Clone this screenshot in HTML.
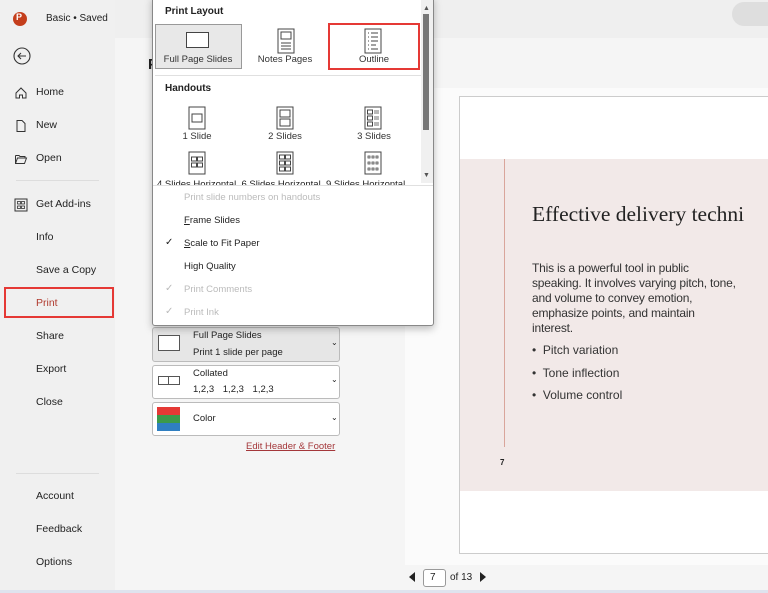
<!DOCTYPE html>
<html><head><meta charset="utf-8"><style>
*{margin:0;padding:0;box-sizing:border-box}
body{width:768px;height:593px;overflow:hidden;background:#f5f5f5;font-family:"Segoe UI","Liberation Sans",sans-serif;font-size:10px;color:#222;position:relative}
.a{position:absolute}
.nav{left:36px;font-size:10.5px;color:#222}
.ico{left:14px;width:14px;height:14px}
.dd{background:#fff;border:1px solid #888;border-radius:3px;box-shadow:0 3px 8px rgba(0,0,0,.25)}
.lbl{font-size:9.5px;color:#333;text-align:center;width:90px}
.mi{left:32px;font-size:9.5px;color:#222}
.dis{color:#bbb}
.box{border:1px solid #bbb;border-radius:3px;background:#fff}
</style></head><body>
<div class="a" style="left:0;top:0;width:768px;height:38px;background:#efefef"></div>
<div class="a" style="left:0;top:0;width:115px;height:593px;background:#f0f0f0"></div>
<div class="a" style="left:13px;top:12px;width:14px;height:14px;border-radius:50%;background:#c43e1c"></div>
<div class="a" style="left:16px;top:12px;color:#fff;font-size:9px;font-weight:bold">P</div>
<div class="a" style="left:46px;top:13px;font-size:10px">Basic • Saved</div>
<svg class="a" style="left:13px;top:47px" width="18" height="18" viewBox="0 0 18 18"><circle cx="9" cy="9" r="8" fill="none" stroke="#333" stroke-width="1.1"/><path d="M13 9H5M8 6L5 9L8 12" fill="none" stroke="#333" stroke-width="1.1"/></svg>
<svg class="a ico" style="top:86px" viewBox="0 0 14 14"><path d="M2 7L7 2L12 7V12H8.5V9H5.5V12H2Z" fill="none" stroke="#333"/></svg>
<div class="a nav" style="top:86px">Home</div>
<svg class="a ico" style="top:119px" viewBox="0 0 14 14"><path d="M3 1.5H8L11 4.5V12.5H3Z" fill="none" stroke="#333"/></svg>
<div class="a nav" style="top:119px">New</div>
<svg class="a ico" style="top:152px" viewBox="0 0 14 14"><path d="M1.5 3.5H5L6 4.5H11V6M1.5 3.5V11.5H10.5L12.5 6H3.5L1.5 11.5" fill="none" stroke="#333"/></svg>
<div class="a nav" style="top:152px">Open</div>
<div class="a" style="left:16px;top:180px;width:83px;height:1px;background:#ddd"></div>
<svg class="a ico" style="top:198px" viewBox="0 0 14 14"><rect x="1" y="1" width="12" height="12" fill="none" stroke="#333"/><rect x="3.5" y="3.5" width="3" height="2.5" fill="none" stroke="#333" stroke-width=".8"/><rect x="7.5" y="3.5" width="3" height="2.5" fill="none" stroke="#333" stroke-width=".8"/><rect x="3.5" y="8" width="3" height="2.5" fill="none" stroke="#333" stroke-width=".8"/><rect x="7.5" y="8" width="3" height="2.5" fill="none" stroke="#333" stroke-width=".8"/></svg>
<div class="a nav" style="top:198px">Get Add-ins</div>
<div class="a nav" style="top:231px">Info</div>
<div class="a nav" style="top:264px">Save a Copy</div>
<div class="a" style="left:4px;top:287px;width:110px;height:31px;border:2px solid #e53935"></div>
<div class="a nav" style="top:297px;color:#b03a2e">Print</div>
<div class="a nav" style="top:330px">Share</div>
<div class="a nav" style="top:363px">Export</div>
<div class="a nav" style="top:396px">Close</div>
<div class="a" style="left:16px;top:473px;width:83px;height:1px;background:#ddd"></div>
<div class="a nav" style="top:490px">Account</div>
<div class="a nav" style="top:523px">Feedback</div>
<div class="a nav" style="top:556px">Options</div>
<div class="a" style="left:115px;top:38px;width:653px;height:555px;background:#f5f5f5"></div>
<div class="a" style="left:148px;top:56px;font-size:15px;font-weight:bold">P</div>
<div class="a" style="left:405px;top:88px;width:363px;height:477px;background:#fbfbfb"></div>
<div class="a" style="left:459px;top:96px;width:320px;height:458px;background:#fff;border:1px solid #ccc"></div>
<div class="a" style="left:460px;top:159px;width:308px;height:332px;background:#f2e9e8"></div>
<div class="a" style="left:504px;top:159px;width:1px;height:288px;background:#d9a59b"></div>
<div class="a" style="left:532px;top:202px;font-family:'Liberation Serif',serif;font-size:21.5px;color:#222;white-space:nowrap">Effective delivery techni</div>
<div class="a" style="left:532px;top:261px;white-space:nowrap;font-family:'Liberation Sans',sans-serif;font-size:12px;line-height:15px;color:#333;letter-spacing:-0.2px">This is a powerful tool in public<br>speaking. It involves varying pitch, tone,<br>and volume to convey emotion,<br>emphasize points, and maintain<br>interest.</div>
<div class="a" style="left:532px;top:339px;font-family:'Liberation Sans',sans-serif;font-size:12px;line-height:22.5px;color:#333">•&nbsp; Pitch variation<br>•&nbsp; Tone inflection<br>•&nbsp; Volume control</div>
<div class="a" style="left:500px;top:458px;font-size:8px;font-weight:bold">7</div>
<div class="a" style="left:409px;top:572px;width:0;height:0;border-top:5px solid transparent;border-bottom:5px solid transparent;border-right:6px solid #222"></div>
<div class="a" style="left:423px;top:569px;width:23px;height:18px;border:1px solid #999;border-radius:3px;background:#fff;font-size:10px;padding:2px 0 0 6px">7</div>
<div class="a" style="left:450px;top:572px;font-size:10px">of 13</div>
<div class="a" style="left:480px;top:572px;width:0;height:0;border-top:5px solid transparent;border-bottom:5px solid transparent;border-left:6px solid #222"></div>
<div class="a" style="left:0;top:590px;width:768px;height:3px;background:#dfe3ee"></div>
<div class="a" style="left:732px;top:2px;width:36px;height:24px;border-radius:14px 0 0 14px;background:#dedede"></div>
<div class="a box" style="left:152px;top:327px;width:188px;height:35px;background:#e6e6e6"></div>
<div class="a" style="left:158px;top:335px;width:22px;height:16px;border:1px solid #555;background:#fff"></div>
<div class="a" style="left:193px;top:330px;font-size:9.5px">Full Page Slides</div>
<div class="a" style="left:193px;top:347px;font-size:9.5px">Print 1 slide per page</div>
<div class="a" style="left:331px;top:338px;font-size:8px">⌄</div>
<div class="a box" style="left:152px;top:365px;width:188px;height:34px"></div>
<div class="a" style="left:158px;top:376px;width:11px;height:9px;border:1px solid #555"></div>
<div class="a" style="left:169px;top:376px;width:11px;height:9px;border:1px solid #555;border-left:none"></div>
<div class="a" style="left:193px;top:368px;font-size:9.5px">Collated</div>
<div class="a" style="left:193px;top:384px;font-size:9.5px;word-spacing:6px">1,2,3 1,2,3 1,2,3</div>
<div class="a" style="left:331px;top:375px;font-size:8px">⌄</div>
<div class="a box" style="left:152px;top:402px;width:188px;height:34px"></div>
<div class="a" style="left:157px;top:407px;width:23px;height:8px;background:#e53935"></div>
<div class="a" style="left:157px;top:415px;width:23px;height:8px;background:#3c9a4a"></div>
<div class="a" style="left:157px;top:423px;width:23px;height:8px;background:#2f7fc1"></div>
<div class="a" style="left:193px;top:413px;font-size:9.5px">Color</div>
<div class="a" style="left:331px;top:413px;font-size:8px">⌄</div>
<div class="a" style="left:246px;top:441px;font-size:9.5px;color:#a4373a;text-decoration:underline">Edit Header &amp; Footer</div>
<div class="a dd" style="left:152px;top:-4px;width:282px;height:330px"></div>
<div class="a" style="left:421px;top:0;width:12px;height:183px;background:#f0f0f0"></div>
<div class="a" style="left:423px;top:14px;width:6px;height:116px;background:#777"></div>
<div class="a" style="left:423px;top:5px;font-size:7px;color:#555">▲</div>
<div class="a" style="left:423px;top:172px;font-size:7px;color:#555">▼</div>
<div class="a" style="left:165px;top:6px;font-size:10px;font-weight:bold">Print Layout</div>
<div class="a" style="left:155px;top:24px;width:87px;height:45px;background:#e8e8e8;border:1px solid #999"></div>
<div class="a" style="left:186px;top:32px;width:23px;height:16px;border:1px solid #444;background:#fff"></div>
<div class="a lbl" style="left:153px;top:54px">Full Page Slides</div>
<svg class="a" style="left:276px;top:28px" width="20" height="26" viewBox="0 0 20 26"><rect x="2" y="1" width="16" height="24" fill="#fff" stroke="#444"/><rect x="5" y="4" width="10" height="7" fill="none" stroke="#444"/><path d="M5 15H15M5 18H15M5 21H15" stroke="#444"/></svg>
<div class="a lbl" style="left:240px;top:54px">Notes Pages</div>
<div class="a" style="left:328px;top:23px;width:92px;height:47px;border:2px solid #e53935"></div>
<svg class="a" style="left:363px;top:28px" width="20" height="26" viewBox="0 0 20 26"><rect x="2" y="1" width="16" height="24" fill="#fff" stroke="#444"/><path d="M5 5H6M8 5H15M5 9H6M8 9H15M5 13H6M8 13H15M5 17H6M8 17H13M5 21H6M8 21H15" stroke="#444"/></svg>
<div class="a lbl" style="left:329px;top:54px">Outline</div>
<div class="a" style="left:155px;top:75px;width:266px;height:1px;background:#e0e0e0"></div>
<div class="a" style="left:165px;top:83px;font-size:10px;font-weight:bold">Handouts</div>
<svg class="a" style="left:188px;top:106px" width="18" height="24" viewBox="0 0 18 24"><rect x="1" y="1" width="16" height="22" fill="#fff" stroke="#444"/><rect x="4" y="8" width="10" height="8" fill="none" stroke="#444"/></svg>
<div class="a lbl" style="left:152px;top:131px">1 Slide</div>
<svg class="a" style="left:276px;top:106px" width="18" height="24" viewBox="0 0 18 24"><rect x="1" y="1" width="16" height="22" fill="#fff" stroke="#444"/><rect x="4" y="4" width="10" height="7" fill="none" stroke="#444"/><rect x="4" y="13" width="10" height="7" fill="none" stroke="#444"/></svg>
<div class="a lbl" style="left:240px;top:131px">2 Slides</div>
<svg class="a" style="left:364px;top:106px" width="18" height="24" viewBox="0 0 18 24"><rect x="1" y="1" width="16" height="22" fill="#fff" stroke="#444"/><rect x="3.5" y="4" width="5" height="4" fill="none" stroke="#444"/><rect x="3.5" y="10" width="5" height="4" fill="none" stroke="#444"/><rect x="3.5" y="16" width="5" height="4" fill="none" stroke="#444"/><path d="M10 5H15M10 7H15M10 11H15M10 13H15M10 17H15M10 19H15" stroke="#444" stroke-width=".8"/></svg>
<div class="a lbl" style="left:329px;top:131px">3 Slides</div>
<svg class="a" style="left:188px;top:151px" width="18" height="24" viewBox="0 0 18 24"><rect x="1" y="1" width="16" height="22" fill="#fff" stroke="#444"/><rect x="3.5" y="6" width="5" height="4" fill="none" stroke="#444"/><rect x="9.5" y="6" width="5" height="4" fill="none" stroke="#444"/><rect x="3.5" y="12" width="5" height="4" fill="none" stroke="#444"/><rect x="9.5" y="12" width="5" height="4" fill="none" stroke="#444"/></svg>
<svg class="a" style="left:276px;top:151px" width="18" height="24" viewBox="0 0 18 24"><rect x="1" y="1" width="16" height="22" fill="#fff" stroke="#444"/><rect x="3.5" y="4" width="5" height="4" fill="none" stroke="#444"/><rect x="9.5" y="4" width="5" height="4" fill="none" stroke="#444"/><rect x="3.5" y="10" width="5" height="4" fill="none" stroke="#444"/><rect x="9.5" y="10" width="5" height="4" fill="none" stroke="#444"/><rect x="3.5" y="16" width="5" height="4" fill="none" stroke="#444"/><rect x="9.5" y="16" width="5" height="4" fill="none" stroke="#444"/></svg>
<svg class="a" style="left:364px;top:151px" width="18" height="24" viewBox="0 0 18 24"><rect x="1" y="1" width="16" height="22" fill="#fff" stroke="#444"/><path d="M4 5h2v2h-2zM8 5h2v2h-2zM12 5h2v2h-2zM4 11h2v2h-2zM8 11h2v2h-2zM12 11h2v2h-2zM4 17h2v2h-2zM8 17h2v2h-2zM12 17h2v2h-2z" fill="none" stroke="#444" stroke-width=".8"/></svg>
<div class="a" style="left:155px;top:179px;width:266px;height:6px;overflow:hidden"><div style="font-size:9.5px;white-space:nowrap;margin-left:2px">4 Slides Horizontal&nbsp;&nbsp;6 Slides Horizontal&nbsp;&nbsp;9 Slides Horizontal</div></div>
<div class="a" style="left:153px;top:185px;width:280px;height:1px;background:#e0e0e0"></div>
<div class="a mi dis" style="left:184px;top:192px">Print slide numbers on handouts</div>
<div class="a mi" style="left:184px;top:215px"><u>F</u>rame Slides</div>
<div class="a" style="left:165px;top:237px;font-size:10px">✓</div>
<div class="a mi" style="left:184px;top:238px"><u>S</u>cale to Fit Paper</div>
<div class="a mi" style="left:184px;top:261px">High Quality</div>
<div class="a dis" style="left:165px;top:283px;font-size:10px">✓</div>
<div class="a mi dis" style="left:184px;top:284px">Print Comments</div>
<div class="a dis" style="left:165px;top:306px;font-size:10px">✓</div>
<div class="a mi dis" style="left:184px;top:307px">Print Ink</div>
</body></html>
